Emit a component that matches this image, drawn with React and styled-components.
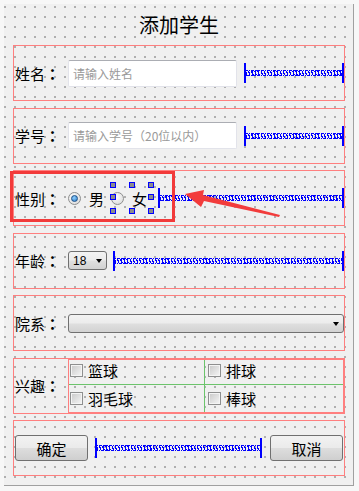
import React from 'react'
import styled, { createGlobalStyle } from 'styled-components'

const Global = createGlobalStyle`
  html, body { margin: 0; padding: 0; background: #f7f7f7; }
  body { font-family: "Noto Sans CJK SC", "Noto Sans", sans-serif; color: #000; }
`

const Page = styled.div`
  width: 359px;
  height: 491px;
  padding: 4px 0 0 4px;
  box-sizing: border-box;
`

const Form = styled.div`
  position: relative;
  width: 350px;
  height: 482px;
  box-sizing: border-box;
  border-right: 1px solid #a0a0a0;
  border-bottom: 1px solid #a0a0a0;
  background-color: #f0f0f0;
  background-image: radial-gradient(circle, #8a8a8a 0.6px, transparent 0.9px);
  background-size: 10px 10px;
  background-position: -4px -2px;
  padding: 0 8px 0 9px;
  display: flex;
  flex-direction: column;
`

const Title = styled.div`
  height: 41px;
  display: flex;
  align-items: center;
  justify-content: center;
  font-size: 20px;
`

const Stack = styled.div`
  display: flex;
  flex-direction: column;
  gap: 6.5px;
`

const Box = styled.div`
  height: 56px;
  box-sizing: border-box;
  border: ${p => (p.$bare ? 'none' : '1px solid #ff7f7f')};
  display: flex;
  align-items: center;
  padding: 0 ${p => p.$pr || 0}px 0 ${p => (p.$bare ? 0 : 1)}px;
`

const Label = styled.div`
  width: 53px;
  flex: none;
  font-size: 15px;
  white-space: nowrap;
`

/* the colon of the label sits in the middle of its em box, as in the Windows font */
const Colon = styled.span`
  font-family: "Noto Sans CJK TC", "Noto Sans CJK SC", sans-serif;
  font-weight: 700;
`

const Input = styled.input`
  width: 169px;
  height: 27px;
  flex: none;
  box-sizing: border-box;
  border: 1px solid #e2e3ea;
  border-top-color: #abadb3;
  border-radius: 2px;
  background: #fff;
  padding: 0 4px;
  margin-right: 7px;
  font-family: "Noto Sans CJK SC", sans-serif;
  font-size: 12px;
  outline: none;
  &::placeholder { color: #9a9a9a; }
`

const Spring = styled.div`
  flex: 1;
  height: 20px;
  box-sizing: border-box;
  position: relative;
  border-left: 2px solid #0000ff;
  border-right: 2px solid #0000ff;
  margin-left: ${p => p.$ml || 0}px;
  margin-right: ${p => p.$mr || 0}px;
  &::before {
    content: '';
    position: absolute;
    left: 0;
    right: 0;
    top: 7px;
    height: 6px;
    border-top: 1px dotted #0000ff;
    border-bottom: 1px dotted #0000ff;
    box-sizing: border-box;
    background: repeating-linear-gradient(72deg, #0000ff 0 1.3px, transparent 1.3px 3px);
  }
`

const RadioItem = styled.div`
  position: relative;
  display: flex;
  align-items: center;
  gap: 8px;
  height: 26px;
  width: ${p => p.$w}px;
  margin-right: ${p => p.$mr || 0}px;
  font-size: 15px;
`

const RadioDot = styled.span`
  width: 13px;
  height: 13px;
  flex: none;
  box-sizing: border-box;
  border-radius: 50%;
  border: 1px solid #8e8f8f;
  background: radial-gradient(circle at 40% 35%, #ffffff, #d4d4d4);
  display: flex;
  align-items: center;
  justify-content: center;
  &::after {
    content: '';
    display: ${p => (p.$on ? 'block' : 'none')};
    width: 7px;
    height: 7px;
    border-radius: 50%;
    box-sizing: border-box;
    border: 1px solid #1b4f86;
    background: radial-gradient(circle at 40% 35%, #8fd0ff, #2a78c4);
  }
`

const Handle = styled.span`
  position: absolute;
  width: 6px;
  height: 6px;
  box-sizing: border-box;
  background: #8c8c8c;
  border: 1px solid #0000ff;
  left: ${p => p.$x}px;
  top: ${p => p.$y}px;
`

const Combo = styled.div`
  height: 19px;
  box-sizing: border-box;
  flex: ${p => (p.$wide ? 1 : 'none')};
  width: ${p => (p.$wide ? 'auto' : `${p.$w}px`)};
  margin-right: ${p => p.$mr || 0}px;
  border: 1px solid #707070;
  border-radius: 3px;
  background: linear-gradient(#f3f3f3, #ececec 45%, #dedede 55%, #d2d2d2);
  display: flex;
  align-items: center;
  justify-content: space-between;
  padding: 0 4px 0 4px;
  font-family: "Liberation Sans", sans-serif;
  font-size: 12px;
`

const Caret = styled.span`
  width: 0;
  height: 0;
  border-left: 3.5px solid transparent;
  border-right: 3.5px solid transparent;
  border-top: 4px solid #000;
  margin-top: 1px;
`

const LabelCell = styled.div`
  width: 55px;
  height: 56px;
  flex: none;
  box-sizing: border-box;
  border: 1px solid #ff7f7f;
  border-right: none;
  padding-left: 1px;
  display: flex;
  align-items: center;
  font-size: 15px;
  white-space: nowrap;
`

const Grid = styled.div`
  flex: 1;
  height: 56px;
  box-sizing: border-box;
  border: 2px solid #ff7f7f;
  border-left-width: 1px;
  display: grid;
  grid-template-columns: 136px 1fr;
  grid-template-rows: 25px 1fr;
`

const Cell = styled.div`
  display: flex;
  align-items: center;
  gap: 5px;
  padding-left: ${p => (p.$right ? 3 : 1)}px;
  padding-bottom: ${p => (p.$top ? 2 : 0)}px;
  font-size: 15px;
  border-right: ${p => (p.$right ? 'none' : '1px solid #6cc46c')};
  border-bottom: ${p => (p.$top ? '1px solid #6cc46c' : 'none')};
`

const Check = styled.span`
  width: 13px;
  height: 13px;
  flex: none;
  box-sizing: border-box;
  border: 1px solid #8e8f8f;
  background: linear-gradient(135deg, #c8c8c8, #f6f6f6);
  box-shadow: inset 0 0 0 1px #f4f4f4;
`

const Button = styled.div`
  width: 73px;
  height: 26px;
  flex: none;
  box-sizing: border-box;
  border: 1px solid #707070;
  border-radius: 3px;
  background: linear-gradient(#f2f2f2, #ebebeb 48%, #dddddd 52%, #cfcfcf);
  display: flex;
  align-items: center;
  justify-content: center;
  font-size: 15px;
  margin-left: ${p => p.$ml || 0}px;
`

const Annot = styled.div`
  position: absolute;
  left: 6px;
  top: 167px;
  width: 165px;
  height: 51px;
  box-sizing: border-box;
  border: 3px solid #f23a3a;
  pointer-events: none;
`

const ArrowSvg = styled.svg`
  position: absolute;
  left: 0;
  top: 0;
  pointer-events: none;
`

const handles = [
  [-1, -3], [18, -3], [37, -3],
  [-1, 9], [37, 9],
  [-1, 23], [18, 23], [37, 23],
]

function FieldLabel({ text, as: As = Label }) {
  return (
    <As>
      {text}
      <Colon>：</Colon>
    </As>
  )
}

export default function App() {
  return (
    <>
      <Global />
      <Page>
        <Form>
          <Title>添加学生</Title>
          <Stack>
            <Box>
              <FieldLabel text="姓名" />
              <Input readOnly placeholder="请输入姓名" />
              <Spring />
            </Box>
            <Box>
              <FieldLabel text="学号" />
              <Input readOnly placeholder="请输入学号（20位以内）" />
              <Spring />
            </Box>
            <Box>
              <FieldLabel text="性别" />
              <RadioItem $w={34} $mr={9}>
                <RadioDot $on />男
              </RadioItem>
              <RadioItem $w={41} $mr={6}>
                <RadioDot />女
                {handles.map(([x, y], i) => (
                  <Handle key={i} $x={x} $y={y} />
                ))}
              </RadioItem>
              <Spring />
            </Box>
            <Box>
              <FieldLabel text="年龄" />
              <Combo $w={39} $mr={6}>
                <span>18</span>
                <Caret />
              </Combo>
              <Spring />
            </Box>
            <Box>
              <FieldLabel text="院系" />
              <Combo $wide>
                <span />
                <Caret />
              </Combo>
            </Box>
            <Box $bare>
              <FieldLabel text="兴趣" as={LabelCell} />
              <Grid>
                <Cell $top><Check />篮球</Cell>
                <Cell $top $right><Check />排球</Cell>
                <Cell><Check />羽毛球</Cell>
                <Cell $right><Check />棒球</Cell>
              </Grid>
            </Box>
            <Box $pr={1}>
              <Button>确定</Button>
              <Spring $ml={7} $mr={8} />
              <Button>取消</Button>
            </Box>
          </Stack>
          <Annot />
          <ArrowSvg width="350" height="482" viewBox="0 0 350 482">
            <polygon
              points="181,190 200,186 199,191 276,211 275,213 200,197 197,203"
              fill="#f23c3c"
            />
          </ArrowSvg>
        </Form>
      </Page>
    </>
  )
}
